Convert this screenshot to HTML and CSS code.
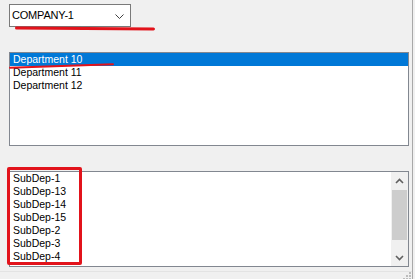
FILE: index.html
```html
<!DOCTYPE html>
<html>
<head>
<meta charset="utf-8">
<link rel="stylesheet" href="styles.css">
</head>
<body>
<div class="window">
  <div class="content">
    <div class="combo">
      <span class="combo-text">COMPANY-1</span>
      <svg class="chev" width="9" height="5" viewBox="0 0 9 5"><polyline points="0.5,0.5 4.5,4.5 8.5,0.5" fill="none" stroke="#404040" stroke-width="1"/></svg>
    </div>
    <div class="list list1">
      <div class="item selected">Department 10</div>
      <div class="item">Department 11</div>
      <div class="item">Department 12</div>
    </div>
    <div class="list list2">
      <div class="items">
        <div class="item">SubDep-1</div>
        <div class="item">SubDep-13</div>
        <div class="item">SubDep-14</div>
        <div class="item">SubDep-15</div>
        <div class="item">SubDep-2</div>
        <div class="item">SubDep-3</div>
        <div class="item">SubDep-4</div>
      </div>
      <div class="vscroll">
        <div class="sbtn"><svg width="9" height="6" viewBox="0 0 9 6"><polyline points="1,5 4.5,1.5 8,5" fill="none" stroke="#606060" stroke-width="1.6"/></svg></div>
        <div class="track"><div class="thumb"></div></div>
        <div class="sbtn"><svg width="9" height="6" viewBox="0 0 9 6"><polyline points="1,1 4.5,4.5 8,1" fill="none" stroke="#606060" stroke-width="1.6"/></svg></div>
      </div>
    </div>
  </div>
  <div class="status">
    <svg class="grip" width="10" height="10" viewBox="0 0 10 10">
      <rect x="7" y="1" width="2" height="2" fill="#bdbdbd"/>
      <rect x="4" y="4" width="2" height="2" fill="#bdbdbd"/>
      <rect x="7" y="4" width="2" height="2" fill="#bdbdbd"/>
      <rect x="1" y="7" width="2" height="2" fill="#bdbdbd"/>
      <rect x="4" y="7" width="2" height="2" fill="#bdbdbd"/>
      <rect x="7" y="7" width="2" height="2" fill="#bdbdbd"/>
    </svg>
  </div>
  <div class="mark mark-combo"></div>
  <div class="mark mark-dept"></div>
  <div class="mark-box"></div>
</div>
</body>
</html>
```
FILE: styles.css
```css
html, body {
  margin: 0;
  padding: 0;
  background: #f0f0f0;
}
.window {
  position: relative;
  box-sizing: border-box;
  width: 413px;
  height: 279px;
  border-right: 1px solid #a8a8a8;
  background: #f0f0f0;
  font-family: "Liberation Sans", Arial, sans-serif;
  font-size: 10.5px;
  color: #000;
  display: flex;
  flex-direction: column;
  overflow: hidden;
}
.content {
  display: flex;
  flex-direction: column;
  padding: 4px 0 0 9px;
}
.combo {
  box-sizing: border-box;
  width: 122px;
  height: 23px;
  border: 1px solid #7a7a7a;
  background: #fff;
  display: flex;
  align-items: center;
  justify-content: space-between;
  padding: 0 6px 1px 2px;
}
.combo-text {
  font-size: 11px;
  letter-spacing: -0.2px;
}
.chev {
  display: block;
  margin-top: 2px;
}
.list {
  box-sizing: border-box;
  width: 400px;
  border: 1px solid #828790;
  background: #fff;
}
.list1 {
  margin-top: 25px;
  height: 94px;
}
.list2 {
  margin-top: 25px;
  height: 96px;
  display: flex;
}
.item {
  height: 13px;
  line-height: 13px;
  padding-left: 3px;
  white-space: nowrap;
}
.item.selected {
  background: #0078d7;
  color: #fff;
}
.items {
  flex: 1;
  overflow: hidden;
}
.vscroll {
  width: 17px;
  display: flex;
  flex-direction: column;
  background: #f0f0f0;
}
.sbtn {
  height: 17px;
  display: flex;
  align-items: center;
  justify-content: center;
}
.track {
  flex: 1;
  display: flex;
  flex-direction: column;
}
.thumb {
  margin-top: 1px;
  height: 50px;
  margin-left: 1px;
  margin-right: 1px;
  background: #cdcdcd;
}
.status {
  margin-top: auto;
  height: 7px;
  border-top: 1px solid #e3e3e3;
  display: flex;
  justify-content: flex-end;
  align-items: flex-end;
}
.grip {
  display: block;
  margin-right: 0;
  margin-bottom: -2px;
}
.mark {
  position: absolute;
  background: #e2131b;
  border-radius: 2px;
}
.mark-combo {
  left: 15px;
  top: 27px;
  width: 140px;
  height: 3px;
  transform: rotate(0.4deg);
}
.mark-dept {
  left: 9px;
  top: 65px;
  width: 105px;
  height: 2px;
  transform: rotate(-2deg);
}
.mark-box {
  position: absolute;
  left: 7px;
  top: 167px;
  width: 75px;
  height: 98px;
  box-sizing: border-box;
  border: 3px solid #e2131b;
  border-radius: 2px;
}
```
